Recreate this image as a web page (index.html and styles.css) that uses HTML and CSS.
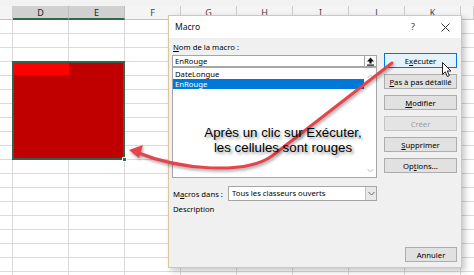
FILE: index.html
```html
<!DOCTYPE html>
<html lang="fr">
<head>
<meta charset="utf-8">
<title>Macro</title>
<link rel="stylesheet" href="styles.css">
</head>
<body>
<div class="sheet">
  <div class="topstrip"></div>
  <div class="headers">
    <div class="colhdr"></div>
    <div class="colhdr sel">D</div>
    <div class="colhdr sel">E</div>
    <div class="colhdr">F</div>
    <div class="colhdr">G</div>
    <div class="colhdr">H</div>
    <div class="colhdr">I</div>
    <div class="colhdr">J</div>
    <div class="colhdr">K</div>
    <div class="colhdr"></div>
  </div>
  <div class="cells">
    <div class="selection"><div class="active"></div><div class="handle"></div></div>
  </div>
</div>

<div class="dialog">
  <div class="titlebar">
    <span class="title">Macro</span>
    <span class="help">?</span>
    <svg class="close" width="9" height="9" viewBox="0 0 9 9"><path d="M0.5 0.5 L8.5 8.5 M8.5 0.5 L0.5 8.5" stroke="#333" stroke-width="1" fill="none"/></svg>
  </div>
  <div class="dbody">
    <div class="main">
      <div class="leftcol">
        <div class="label"><u>N</u>om de la macro :</div>
        <div class="namerow">
          <div class="namebox">EnRouge</div>
          <div class="upbtn">
            <svg width="9" height="9" viewBox="0 0 9 9"><path d="M4.5 0.5 L8 4.5 L5.6 4.5 L5.6 6.5 L3.4 6.5 L3.4 4.5 L1 4.5 Z" fill="#111"/><rect x="1" y="7.5" width="7" height="1.2" fill="#111"/></svg>
          </div>
        </div>
        <div class="list">
          <div class="items">
            <div class="item">DateLongue</div>
            <div class="item selected">EnRouge</div>
          </div>
          <div class="vscroll">
            <svg width="7" height="5" viewBox="0 0 7 5"><path d="M0.5 4 L3.5 1 L6.5 4" stroke="#b8b8b8" fill="none" stroke-width="1"/></svg>
            <svg width="7" height="5" viewBox="0 0 7 5"><path d="M0.5 1 L3.5 4 L6.5 1" stroke="#b8b8b8" fill="none" stroke-width="1"/></svg>
          </div>
        </div>
      </div>
      <div class="buttons">
        <div class="btn default">E<u>x</u>écuter</div>
        <div class="btn"><u>P</u>as à pas détaillé</div>
        <div class="btn"><u>M</u>odifier</div>
        <div class="btn disabled">Créer</div>
        <div class="btn"><u>S</u>upprimer</div>
        <div class="btn">Op<u>t</u>ions...</div>
      </div>
    </div>
    <div class="dansrow">
      <span class="label">M<u>a</u>cros dans :</span>
      <div class="combo">
        <span class="combotext">Tous les classeurs ouverts</span>
        <div class="dropbtn"><svg width="7" height="5" viewBox="0 0 7 5"><path d="M0.5 1 L3.5 4 L6.5 1" stroke="#666" fill="none" stroke-width="1"/></svg></div>
      </div>
    </div>
    <div class="label desc">Description</div>
    <div class="btn cancel">Annuler</div>
  </div>
</div>

<svg class="arrow" width="474" height="275" viewBox="0 0 474 275">
  <path d="M392 63 L272 156 C245 175 180 170 136 152" stroke="#e6434b" stroke-width="3" fill="none" stroke-linecap="round"/>
  <path d="M129 150 L143 145 L139 158 Z" fill="#e6434b"/>
</svg>

<div class="note">Après un clic sur Exécuter,<br>les cellules sont rouges</div>

<svg class="cursor" width="11" height="16" viewBox="0 0 11 16"><path d="M0.5 0.5 L0.5 12.5 L3.3 9.8 L5.3 14.5 L7.3 13.6 L5.3 9 L9 9 Z" fill="#fff" stroke="#222" stroke-width="1" stroke-linejoin="round"/></svg>
</body>
</html>
```

FILE: styles.css
```css
* { box-sizing: border-box; }
html, body { margin: 0; padding: 0; }
body {
  width: 474px;
  height: 275px;
  overflow: hidden;
  position: relative;
  background: #fff;
  font-family: "Noto Sans", "Liberation Sans", sans-serif;
  color: #000;
}

/* spreadsheet */
.sheet { display: flex; flex-direction: column; }
.topstrip { height: 6px; background: #f2f2f2; }
.headers {
  display: grid;
  grid-template-columns: 13px repeat(8, 56px) 13px;
  height: 14px;
}
.colhdr {
  background: #f4f4f4;
  border-right: 1px solid #cdcdcd;
  border-bottom: 1px solid #c4c4c4;
  font-size: 9px;
  color: #444;
  display: flex;
  align-items: center;
  justify-content: center;
  line-height: 1;
}
.colhdr.sel {
  background: #d0d0d0;
  border-bottom: 2px solid #2f6b4b;
  border-right-color: #bdbdbd;
  color: #222;
}
.cells {
  display: grid;
  grid-template-columns: 13px repeat(8, 56px) 13px;
  grid-template-rows: repeat(19, 14px);
  background-image:
    linear-gradient(to right, transparent 55px, #dadada 55px, #dadada 56px),
    linear-gradient(to bottom, transparent 13px, #dadada 13px);
  background-size: 56px 100%, 100% 14px;
  background-position: 13px 0, 0 0;
}
.selection {
  grid-column: 2 / 4;
  grid-row: 4 / 11;
  margin: -1px 0 0 -1px;
  background: #c00000;
  border: 2px solid #35604a;
  position: relative;
}
.active { width: 55px; height: 12px; background: #ff0000; }
.handle {
  position: absolute;
  right: -4px;
  bottom: -4px;
  width: 5px;
  height: 5px;
  background: #2f6b4b;
  border: 1px solid #fff;
}

/* dialog */
.dialog {
  position: absolute;
  left: 168px;
  top: 15px;
  width: 294px;
  height: 253px;
  border: 1px solid #d9c89b;
  background: #f0f0f0;
  box-shadow: 3px 3px 6px rgba(0,0,0,0.22);
  display: flex;
  flex-direction: column;
  font-size: 7.7px;
  line-height: 10px;
}
.titlebar {
  height: 22px;
  background: #fff;
  display: flex;
  align-items: center;
  padding-left: 6px;
  font-size: 8.5px;
}
.title { flex: 1; color: #111; }
.help { width: 10px; text-align: center; margin-right: 23px; font-size: 9px; color: #333; }
.close { margin-right: 11px; }

.dbody {
  flex: 1;
  display: flex;
  flex-direction: column;
  padding-left: 3px;
}
.main { display: flex; }
.leftcol { width: 205px; display: flex; flex-direction: column; }
.label { padding-left: 1px; height: 10px; white-space: nowrap; }
.leftcol > .label { margin-top: 4px; }
.namerow { margin-top: 3px; height: 12px; display: flex; }
.namebox {
  flex: 1;
  background: #fff;
  border: 1px solid #a6a6a6;
  border-right: none;
  padding-left: 2px;
  line-height: 10px;
}
.upbtn {
  width: 13px;
  background: #fafafa;
  border: 1px solid #a6a6a6;
  display: flex;
  align-items: center;
  justify-content: center;
}
.list {
  height: 111px;
  background: #fff;
  border: 1px solid #a6a6a6;
  display: flex;
}
.items { flex: 1; }
.item { height: 10px; line-height: 10px; padding-left: 2px; }
.item:first-child { margin-top: 1px; }
.item.selected { background: #0078d7; color: #fff; }
.vscroll {
  width: 12px;
  display: flex;
  flex-direction: column;
  justify-content: space-between;
  align-items: center;
  padding: 6px 0 4px;
}

.buttons {
  margin-left: 7px;
  width: 73px;
  padding-top: 15px;
  display: flex;
  flex-direction: column;
  gap: 6px;
}
.btn {
  height: 15px;
  background: #e1e1e1;
  border: 1px solid #adadad;
  display: flex;
  align-items: center;
  justify-content: center;
  white-space: nowrap;
}
.btn.default { background: #e5f1fb; border-color: #0078d7; }
.btn.disabled { color: #9d9d9d; border-color: #c4c4c4; background: #e4e4e4; }

.dansrow {
  margin-top: 8px;
  width: 205px;
  height: 15px;
  display: flex;
  align-items: center;
}
.combo {
  margin-left: auto;
  width: 149px;
  height: 15px;
  background: #fff;
  border: 1px solid #a6a6a6;
  display: flex;
}
.combotext { flex: 1; padding-left: 3px; line-height: 13px; }
.dropbtn {
  width: 11px;
  background: #e8e8e8;
  border-left: 1px solid #c2c2c2;
  display: flex;
  align-items: center;
  justify-content: center;
}
.desc { margin-top: 3px; }
.cancel {
  margin-top: auto;
  align-self: flex-end;
  width: 52px;
  margin-right: 4px;
  margin-bottom: 5px;
}

/* annotations */
.arrow {
  position: absolute;
  left: 0;
  top: 0;
  filter: drop-shadow(1px 2px 1.5px rgba(0,0,0,0.35));
}
.note {
  position: absolute;
  left: 183px;
  top: 125px;
  width: 200px;
  text-align: center;
  font-family: "Liberation Sans", Arial, sans-serif;
  font-size: 13.3px;
  line-height: 15px;
  color: #000;
  text-shadow: 2px 2px 3px rgba(0,0,0,0.45);
}
.cursor { position: absolute; left: 441.5px; top: 61.5px; }
```
